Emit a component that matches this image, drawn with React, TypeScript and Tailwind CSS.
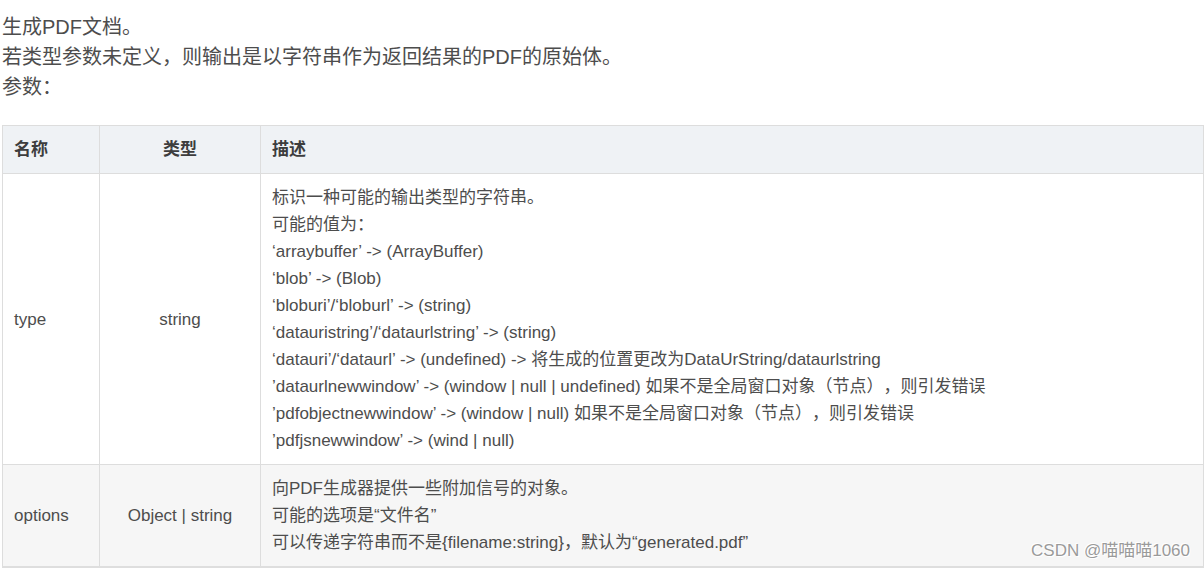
import React from 'react'

const font = { fontFamily: '"Liberation Sans", "Noto Sans CJK SC", sans-serif' }

const typeValues = [
  '标识一种可能的输出类型的字符串。',
  '可能的值为：',
  '‘arraybuffer’ -> (ArrayBuffer)',
  '‘blob’ -> (Blob)',
  '‘bloburi’/‘bloburl’ -> (string)',
  '‘datauristring’/‘dataurlstring’ -> (string)',
  '‘datauri’/‘dataurl’ -> (undefined) -> 将生成的位置更改为DataUrString/dataurlstring',
  '’dataurlnewwindow’ -> (window | null | undefined) 如果不是全局窗口对象（节点），则引发错误',
  '’pdfobjectnewwindow’ -> (window | null) 如果不是全局窗口对象（节点），则引发错误',
  '’pdfjsnewwindow’ -> (wind | null)',
]

const optionValues = [
  '向PDF生成器提供一些附加信号的对象。',
  '可能的选项是“文件名”',
  '可以传递字符串而不是{filename:string}，默认为“generated.pdf”',
]

const App = () => {
  return (
    <div
      className="relative w-[1204px] h-[569px] overflow-hidden bg-white pl-[2px] pt-[12px] text-[#4d4d4d] [text-spacing-trim:space-all]"
      style={font}
    >
      <div className="text-[20px] leading-[30px]">
        <p>生成PDF文档。</p>
        <p>若类型参数未定义，则输出是以字符串作为返回结果的PDF的原始体。</p>
        <p>参数：</p>
      </div>

      <table className="mt-[23px] w-[1202px] border-collapse text-[17px] leading-[27px] border-b-2 border-b-[#dedede]">
        <thead>
          <tr className="bg-[#eff2f5] font-bold text-[#3d3d3d]">
            <th className="w-[97px] border border-[#dddddd] px-[11px] py-[10px] text-left">名称</th>
            <th className="w-[161px] border border-[#dddddd] px-[11px] py-[10px] text-center">类型</th>
            <th className="border border-[#dddddd] px-[11px] py-[10px] text-left">描述</th>
          </tr>
        </thead>
        <tbody>
          <tr className="bg-white">
            <td className="border border-[#dddddd] px-[11px] align-middle">type</td>
            <td className="border border-[#dddddd] px-[11px] text-center align-middle">string</td>
            <td className="border border-[#dddddd] px-[11px] py-[10px]">
              {typeValues.map((line, i) => (
                <div key={i} className="whitespace-nowrap">{line}</div>
              ))}
            </td>
          </tr>
          <tr className="bg-[#f6f6f6]">
            <td className="border border-[#dddddd] px-[11px] align-middle">options</td>
            <td className="border border-[#dddddd] px-[11px] text-center align-middle">Object | string</td>
            <td className="border border-[#dddddd] px-[11px] py-[10px]">
              {optionValues.map((line, i) => (
                <div key={i} className="whitespace-nowrap">{line}</div>
              ))}
            </td>
          </tr>
        </tbody>
      </table>

      <div
        className="absolute right-[14px] bottom-[8px] text-[17px] leading-[20px] text-[#9a9a9a] whitespace-nowrap"
        style={{ textShadow: '0 0 2px #fff, 1px 1px 0 #fff, -1px -1px 0 #fff' }}
      >
        CSDN @喵喵喵1060
      </div>
    </div>
  )
}

export default App
